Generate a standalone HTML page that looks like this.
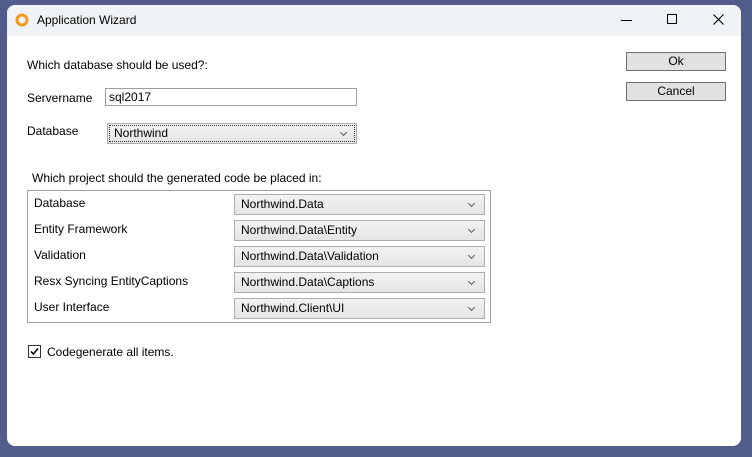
<!DOCTYPE html>
<html><head><style>
*{box-sizing:border-box;margin:0;padding:0}
body{width:752px;height:457px;background:#525c8a;position:relative;overflow:hidden;font-family:"Liberation Sans",sans-serif;font-size:12px;color:#000}
.win{position:absolute;left:7px;top:5px;width:734px;height:441px;background:#fff;border-radius:8px;overflow:hidden}
.tb{position:absolute;left:0;top:0;width:100%;height:31px;background:#eff3f6}
.a{position:absolute;white-space:nowrap}
.cb{position:absolute;height:21px;border:1px solid #adadad;background:linear-gradient(#f2f2f2,#e5e5e5);padding-left:6px;line-height:19px}
.cb:after{content:"";position:absolute;right:10px;top:6px;width:4px;height:4px;border-right:1px solid #555;border-bottom:1px solid #555;transform:rotate(45deg)}
.btn{position:absolute;left:619px;width:100px;height:19px;border:1px solid #707070;background:#e1e1e1;text-align:center;line-height:17px}
</style></head><body>
<div class="win">
<div class="tb">
<svg class="a" style="left:8px;top:8px" width="14" height="14" viewBox="0 0 14 14"><circle cx="7" cy="7" r="5" fill="none" stroke="#f39a1e" stroke-width="3"/></svg>
<div class="a" style="left:30px;top:8px;font-size:12px">Application Wizard</div>
<div class="a" style="left:614px;top:15px;width:11px;height:1px;background:#000"></div>
<div class="a" style="left:660px;top:9px;width:10px;height:10px;border:1px solid #000"></div>
<svg class="a" style="left:706px;top:9px" width="11" height="11" viewBox="0 0 11 11"><path d="M0.5 0.5L10.5 10.5M10.5 0.5L0.5 10.5" stroke="#000" stroke-width="1.1"/></svg>
</div>
<div class="a" style="left:20px;top:53px">Which database should be used?:</div>
<div class="a" style="left:20px;top:86px">Servername</div>
<div class="a" style="left:98px;top:83px;width:252px;height:18px;border:1px solid #a0a0a0;padding-left:3px;line-height:16px">sql2017</div>
<div class="a" style="left:20px;top:119px">Database</div>
<div class="cb" style="left:100px;top:118px;width:250px;outline:1px dotted #333;outline-offset:-3px">Northwind</div>
<div class="a" style="left:25px;top:166px">Which project should the generated code be placed in:</div>
<div class="a" style="left:20px;top:185px;width:464px;height:133px;border:1px solid #a0a0a0"></div>
<div class="a" style="left:27px;top:191px">Database</div>
<div class="a" style="left:27px;top:217px">Entity Framework</div>
<div class="a" style="left:27px;top:243px">Validation</div>
<div class="a" style="left:27px;top:269px">Resx Syncing EntityCaptions</div>
<div class="a" style="left:27px;top:295px">User Interface</div>
<div class="cb" style="left:227px;top:189px;width:251px">Northwind.Data</div>
<div class="cb" style="left:227px;top:215px;width:251px">Northwind.Data\Entity</div>
<div class="cb" style="left:227px;top:241px;width:251px">Northwind.Data\Validation</div>
<div class="cb" style="left:227px;top:267px;width:251px">Northwind.Data\Captions</div>
<div class="cb" style="left:227px;top:293px;width:251px">Northwind.Client\UI</div>
<div class="a" style="left:21px;top:340px;width:13px;height:13px;border:1px solid #333;background:#fff"></div>
<svg class="a" style="left:22px;top:341px" width="11" height="11" viewBox="0 0 11 11"><path d="M2 5.5L4.3 8L9 2.5" fill="none" stroke="#000" stroke-width="1.5"/></svg>
<div class="a" style="left:40px;top:340px">Codegenerate all items.</div>
<div class="btn" style="top:47px">Ok</div>
<div class="btn" style="top:77px">Cancel</div>
</div>
</body></html>
